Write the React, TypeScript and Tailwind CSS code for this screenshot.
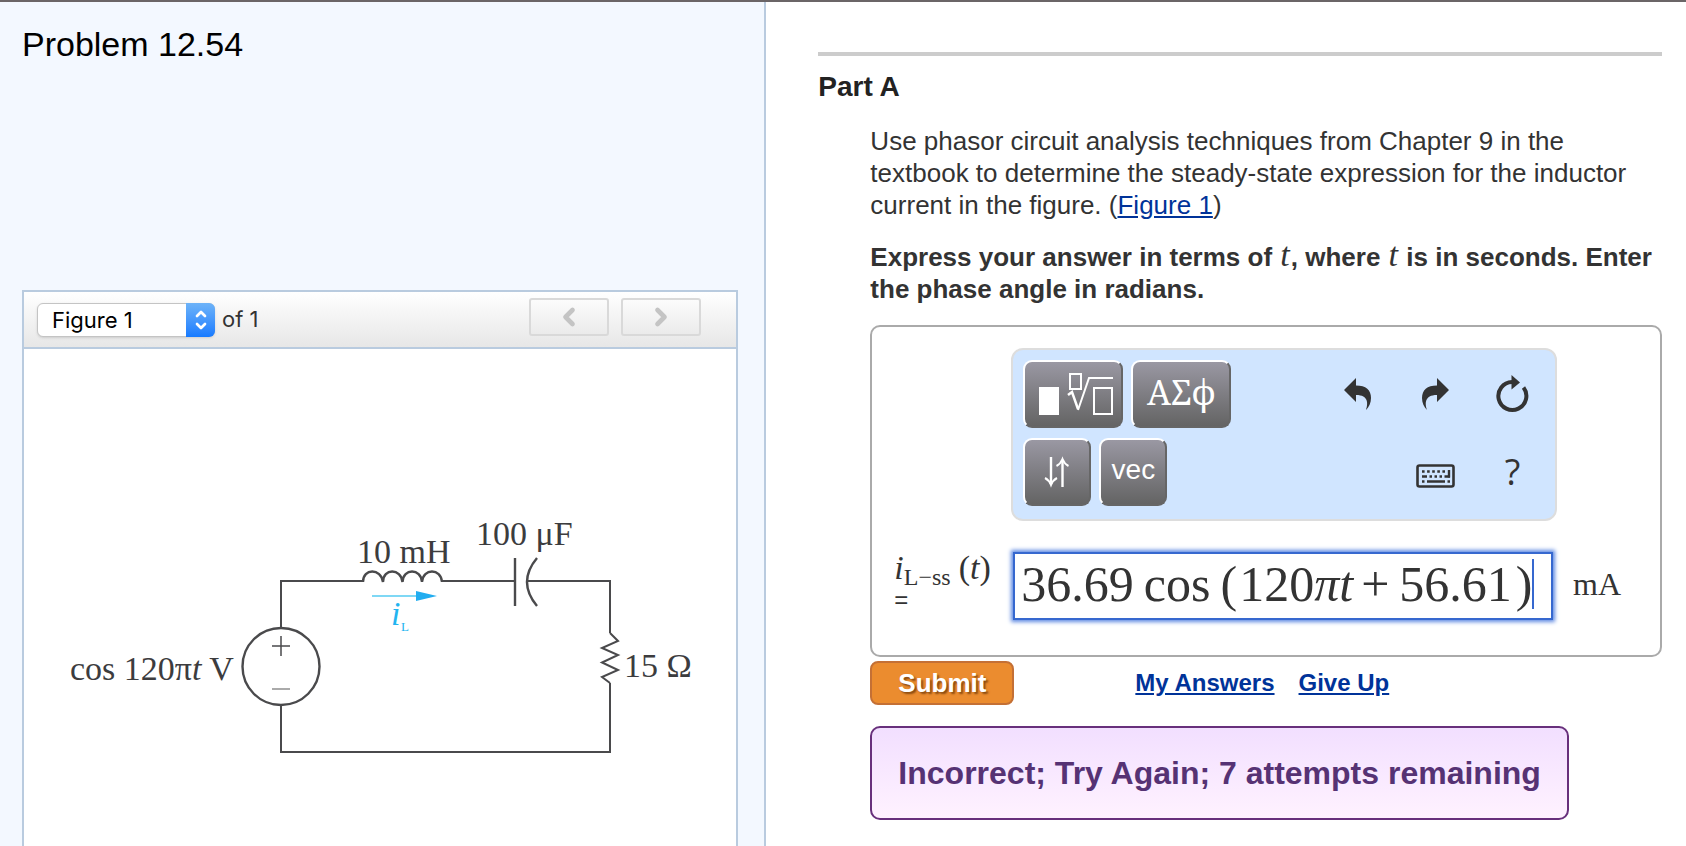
import { ChevronDown, ChevronLeft, ChevronRight, ChevronUp } from "lucide-react";

function PagerButton({ label, icon: Icon }: any) {
  return (
    <button
      aria-label={label}
      className="flex h-[38px] w-20 items-center justify-center rounded-[3px] border-2 border-[#d9d9d9] bg-gradient-to-b from-[#fcfcfc] to-[#ebebeb] text-[#c4c4c4]"
    >
      <Icon className="h-7 w-7" strokeWidth={4} />
    </button>
  );
}

function ToolButton({ label, wide, children }: any) {
  return (
    <button
      aria-label={label}
      className={`flex h-[68px] items-center justify-center rounded-[9px] border-2 border-t-white border-r-[#666] border-b-[#666] border-l-white bg-gradient-to-b from-[#9a98a3] to-[#646464] text-white ${wide ? "w-[100px]" : "w-[68px]"}`}
    >
      {children}
    </button>
  );
}

function IconButton({ label, children }: any) {
  return (
    <button aria-label={label} className="flex h-[68px] w-[77px] items-center justify-center text-[#333]">
      {children}
    </button>
  );
}

function Circuit() {
  return (
    <svg viewBox="0 0 640 250" width="640" height="250" className="h-auto max-w-full" fill="none" stroke="#4a4a4c" strokeWidth="2">
      {/* wires */}
      <path d="M221 118V71H303M382 71H455M467 71H550V123M550 173V242H221V195" />
      {/* source */}
      <circle cx="221" cy="156.5" r="38.5" strokeWidth="2.4" />
      <path d="M212 136H230M221 126V146" strokeWidth="1.5" />
      <path d="M212 179H230" stroke="#aaa" strokeWidth="2" />
      {/* inductor */}
      <path
        d="M303 72C303 58 321 58 323 72C323 58 341 58 342.500 72C343 58 361 58 362 72C363 58 381 58 382 72"
        strokeWidth="2.4"
      />
      {/* capacitor */}
      <path d="M455 48V96M477 48Q457 72 477 96" strokeWidth="2.4" />
      {/* resistor */}
      <path d="M550 123L558 131L542 138L558 145L542 152.500L558 160L542 167L550 173" />
      {/* current arrow */}
      <path d="M312 86H358" stroke="#7fd8f5" />
      <path d="M356 81L377 86L356 91Z" fill="#22adf0" stroke="none" />
      <g stroke="none" fill="#3c3c3e" fontFamily="'Liberation Serif', serif" fontSize="34">
        <text x="10" y="170">
          cos 120π<tspan fontStyle="italic">t</tspan> V
        </text>
        <text x="297" y="53">10 mH</text>
        <text x="416" y="35">100 μF</text>
        <text x="564" y="167">15 Ω</text>
        <g fill="#22b4f0">
          <text x="331" y="115" fontStyle="italic">i</text>
          <text x="341" y="121" fontSize="13">L</text>
        </g>
      </g>
    </svg>
  );
}

function FigurePanel() {
  return (
    <section className="flex min-h-screen flex-col border-r-2 border-[#b9cbdf] bg-[#f3f8ff] pt-[22px] pl-[22px] pr-[26px]">
      <h1 className="h-[266px] text-[34px] leading-10 text-black">Problem 12.54</h1>
      <div className="flex flex-1 flex-col border-2 border-b-0 border-[#b9cbdf] bg-white">
        <div className="flex h-[57px] items-center border-b-2 border-[#b9cbdf] bg-gradient-to-b from-white to-[#e7e7e7] pl-[13px] pr-[35px] font-['Inter',sans-serif]">
          <div className="relative">
            <select
              aria-label="Figure"
              className="h-[34px] w-[178px] appearance-none rounded-md border border-[#c4c4c4] bg-white pl-3.5 text-[22px] leading-7 text-black shadow-sm"
            >
              <option>Figure 1</option>
            </select>
            <span className="pointer-events-none absolute top-0 right-0 flex h-[34px] w-[29px] flex-col items-center justify-center rounded-r-md bg-gradient-to-b from-[#6db3f8] to-[#157aff] text-white">
              <ChevronUp className="-mb-0.5 h-4 w-5" strokeWidth={4} />
              <ChevronDown className="-mt-0.5 h-4 w-5" strokeWidth={4} />
            </span>
          </div>
          <span className="ml-[7px] text-[22px] text-[#333]">of 1</span>
          <div className="mb-1.5 ml-auto flex gap-3">
            <PagerButton label="Previous figure" icon={ChevronLeft} />
            <PagerButton label="Next figure" icon={ChevronRight} />
          </div>
        </div>
        <div className="pt-[161px] pl-9">
          <Circuit />
        </div>
      </div>
    </section>
  );
}

function Toolbar() {
  return (
    <div className="flex justify-between rounded-xl border-2 border-[#ddd] bg-[#d0e5ff] pt-2.5 pr-1 pb-[13px] pl-2.5">
      <div className="flex flex-col gap-2.5">
        <div className="flex gap-2">
          <ToolButton label="Templates" wide>
            <svg width="76" height="44" viewBox="0 0 76 44" className="ml-1.5" fill="none" stroke="#fff" strokeWidth="2">
              <rect x="1" y="15" width="20" height="28" fill="#fff" stroke="none" />
              <rect x="32" y="2" width="11" height="15" />
              <path d="M30 23L34 20L40 37" strokeWidth="2.500" />
              <path d="M40 38L51 6H75" />
              <rect x="56" y="16" width="18" height="26" />
            </svg>
          </ToolButton>
          <ToolButton label="Symbols" wide>
            <span className="pb-1 font-['Noto_Serif','DejaVu_Serif',serif] text-[34px] leading-10">ΑΣϕ</span>
          </ToolButton>
        </div>
        <div className="flex gap-2">
          <ToolButton label="Subscript and superscript">
            <svg width="26" height="32" viewBox="0 0 26 32" fill="none" stroke="#fff" strokeWidth="2.400">
              <path d="M7 1V28M18.500 31V4" />
              <path d="M1 22Q5 24 7 29Q9 24 13 22M12.500 10Q16.500 8 18.500 3Q20.500 8 24.500 10" strokeWidth="2" />
            </svg>
          </ToolButton>
          <ToolButton>
            <span className="pb-1 text-[28px] leading-8">vec</span>
          </ToolButton>
        </div>
      </div>
      <div className="flex flex-col items-end gap-2.5">
        <div className="flex">
          <IconButton label="Undo">
            <svg width="28" height="32" viewBox="0 0 28 32" fill="currentColor">
              <path d="M0 12L12 0V7.500C22 7.500 27 12 27 20C27 25 25 29 22 32C24 26 25 17 12 17V24Z" />
            </svg>
          </IconButton>
          <IconButton label="Redo">
            <svg width="28" height="32" viewBox="0 0 28 32" fill="currentColor">
              <path d="M28 12L16 0V7.500C6 7.500 1 12 1 20C1 25 3 29 6 32C4 26 3 17 16 17V24Z" />
            </svg>
          </IconButton>
          <IconButton label="Reset">
            <svg width="34" height="38" viewBox="0 0 34 38" fill="none">
              <path d="M28.500 12.500A14 14 0 1 1 17 7" stroke="currentColor" strokeWidth="4" />
              <path d="M16.500 0L25 7.500L16.500 14.500Z" fill="currentColor" />
            </svg>
          </IconButton>
        </div>
        <div className="flex">
          <IconButton label="Keyboard shortcuts">
            <svg width="39" height="24" viewBox="0 0 39 24" className="mt-2" fill="none" stroke="currentColor">
              <rect x="1.500" y="1.500" width="36" height="21" rx="2" strokeWidth="2.600" />
              <path d="M6 7.500H29" strokeWidth="2.600" strokeDasharray="2.600 2.500" />
              <path d="M6 12.500H11M13.500 12.500H16M18.500 12.500H21M23.500 12.500H26M28.500 12.500H34" strokeWidth="2.400" />
              <path d="M33 6V13.500" strokeWidth="2.400" />
              <path d="M6 17.500H8.500M11 17.500H29M31.500 17.500H34" strokeWidth="2.400" />
            </svg>
          </IconButton>
          <IconButton label="Help">
            <span className="font-['Open_Sans',sans-serif] text-4xl">?</span>
          </IconButton>
        </div>
      </div>
    </div>
  );
}

function AnswerField() {
  return (
    <div className="relative col-start-2 row-start-2 mr-1 ml-0.5 flex h-[68px] items-center border-2 border-[#3668cf] bg-white pb-1 pl-1.5 font-['Liberation_Serif',serif] text-[50px] leading-[60px] whitespace-pre text-[#333] shadow-[0_0_4px_2px_#5f8ae2]">
      <input id="answer" type="text" className="absolute inset-0 h-full w-full opacity-0" />
      <span>36.69</span>
      <span className="ml-2.5">cos</span>
      <span className="mr-0.5 ml-2.5">(</span>
      <span>120</span>
      <i>πt</i>
      <span className="mx-2">+</span>
      <span className="mr-1 ml-0.5">56.61</span>
      <span>)</span>
      <span className="h-[50px] w-0.5 bg-[#3668cf]" />
    </div>
  );
}

function PartA() {
  return (
    <main className="pt-[50px] pr-6 pb-6 pl-[52px] text-[#333]">
      <hr className="border-t-4 border-[#ccc]" />
      <h2 className="mt-[15px] text-[28px] leading-8 font-bold text-[#222]">Part A</h2>
      <div className="mt-[22px] ml-[52px]">
        <p className="text-[26px] leading-8">
          Use phasor circuit analysis techniques from Chapter 9 in the textbook to determine the steady-state expression for the
          inductor current in the figure. (
          <a href="#figure" className="text-[#003399] underline">Figure 1</a>)
        </p>
        <p className="mt-[18px] text-[26px] leading-8 font-bold">
          Express your answer in terms of{" "}
          <i className="mx-px font-['Liberation_Serif',serif] text-[34px] leading-8 font-normal">t</i>, where{" "}
          <i className="mx-px font-['Liberation_Serif',serif] text-[34px] leading-8 font-normal">t</i> is in seconds. Enter the phase
          angle in radians.
        </p>

        <div className="mt-5 grid grid-cols-[139px_1fr_103px] gap-y-[31px] rounded-[10px] border-2 border-[#aaa] bg-white pt-[21px] pb-[35px]">
          <div className="col-start-2">
            <Toolbar />
          </div>
          <label htmlFor="answer" className="col-start-1 row-start-2 pl-[22px] font-['Liberation_Serif',serif] text-[34px] leading-8">
            <span className="flex items-baseline">
              <i>i</i>
              <span className="relative top-1.5 text-2xl leading-6">L−ss</span>
              <span className="ml-2">
                (<i>t</i>)
              </span>
            </span>
            <span className="block font-['Liberation_Sans',sans-serif] text-2xl leading-8">=</span>
          </label>
          <AnswerField />
          <span className="col-start-3 row-start-2 self-center pb-1 pl-4 font-['Liberation_Serif',serif] text-[32px] leading-8">mA</span>
        </div>

        <div className="mt-1 flex items-center text-2xl font-bold text-[#003399]">
          <button className="h-11 w-36 rounded-lg border-2 border-[#c47035] bg-[#eb8c2f] text-[26px] leading-8 text-white [text-shadow:2px_2px_2px_#8a4a10]">
            Submit
          </button>
          <a href="#answers" className="ml-[121px] underline">My Answers</a>
          <a href="#give-up" className="ml-6 underline">Give Up</a>
        </div>

        <div className="mt-[21px] flex h-[94px] w-fit items-center rounded-[10px] border-2 border-[#68307c] bg-gradient-to-b from-[#f2dfff] to-[#fff2ff] px-[26px] text-[32px] leading-10 font-bold text-[#563274]">
          Incorrect; Try Again; 7 attempts remaining
        </div>
      </div>
    </main>
  );
}

function App() {
  return (
    <div className="grid min-h-screen grid-cols-[5fr_6fr] overflow-hidden border-t-2 border-[#6b6567] bg-white font-['Liberation_Sans',Arial,sans-serif]">
      <FigurePanel />
      <PartA />
    </div>
  );
}

export default App;
